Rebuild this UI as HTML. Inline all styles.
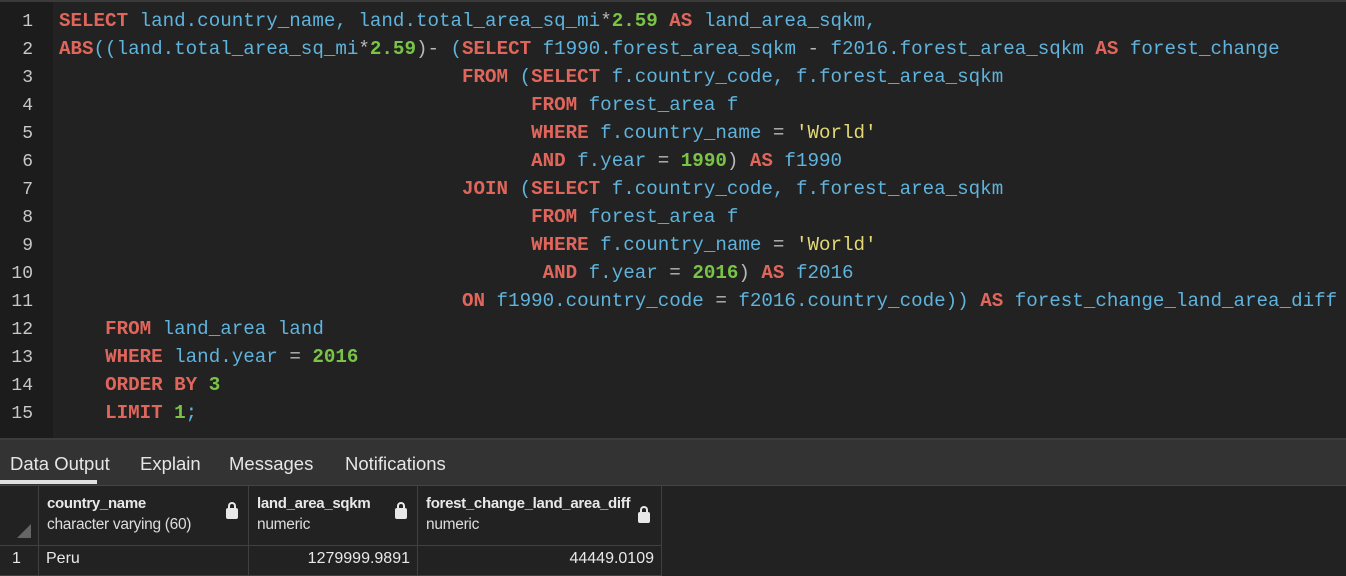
<!DOCTYPE html>
<html><head><style>
body{margin:0;width:1346px;height:575px;background:#222;overflow:hidden;position:relative;font-family:"Liberation Sans",sans-serif}
#top{position:absolute;left:0;top:0;width:1346px;height:2px;background:#3a3a3a}
#gut{position:absolute;left:0;top:2px;width:53px;height:436px;background:#1c1c1c}
#ed{position:absolute;left:0;top:2px;width:1346px;height:436px}
.ln{position:absolute;left:0;width:33px;text-align:right;color:#c8c8c8;font:18px "Liberation Mono",monospace;}
.code{position:absolute;left:59px;white-space:pre;font:19.2px "Liberation Mono",monospace;color:#5fb3dc;}
.k{color:#e0665c;font-weight:bold}
.n{color:#79c447;font-weight:bold}
.s{color:#e3d873}
.p{color:#b8b8b8}
#tabs{position:absolute;left:0;top:438px;width:1346px;height:47px;background:#333;border-top:2px solid #3c3c3c}
.tab{position:absolute;top:13px;color:#e6e6e6;font-size:18.5px}
#ul{position:absolute;left:0;top:40px;width:97px;height:4px;background:#e0e0e0}
#grid{position:absolute;left:0;top:485px;width:1346px;height:90px;background:#222;border-top:1px solid #444}
.c{position:absolute;border-right:1px solid #404040;border-bottom:1px solid #404040;box-sizing:border-box;color:#e8e8e8}
.h1{font-weight:bold;font-size:15px;position:absolute;left:9px;top:9px;letter-spacing:-0.3px}
.h2{font-size:15.5px;position:absolute;left:9px;top:30px;color:#ddd;letter-spacing:-0.3px}
.lock{position:absolute;top:22px;width:12px;height:11px;background:#e8e8e8;border-radius:2px}
.lock:before{content:"";position:absolute;left:2px;top:-6px;width:4px;height:5px;border:2px solid #e8e8e8;border-bottom:none;border-radius:4px 4px 0 0}
</style></head><body>
<div id="top"></div><div id="gut"></div>
<div id="ed">
<div class="ln" style="top:10px">1</div><div class="ln" style="top:38px">2</div><div class="ln" style="top:66px">3</div><div class="ln" style="top:94px">4</div><div class="ln" style="top:122px">5</div><div class="ln" style="top:150px">6</div><div class="ln" style="top:178px">7</div><div class="ln" style="top:206px">8</div><div class="ln" style="top:234px">9</div><div class="ln" style="top:262px">10</div><div class="ln" style="top:290px">11</div><div class="ln" style="top:318px">12</div><div class="ln" style="top:346px">13</div><div class="ln" style="top:374px">14</div><div class="ln" style="top:402px">15</div>
<div class="code" style="top:5px;line-height:28px"><span class="k">SELECT</span> land.country_name, land.total_area_sq_mi<span class="p">*</span><span class="n">2.59</span> <span class="k">AS</span> land_area_sqkm,
<span class="k">ABS</span>((land.total_area_sq_mi<span class="p">*</span><span class="n">2.59</span><span class="p">)-</span> (<span class="k">SELECT</span> f1990.forest_area_sqkm <span class="p">-</span> f2016.forest_area_sqkm <span class="k">AS</span> forest_change
                                   <span class="k">FROM</span> (<span class="k">SELECT</span> f.country_code, f.forest_area_sqkm
                                         <span class="k">FROM</span> forest_area f
                                         <span class="k">WHERE</span> f.country_name <span class="p">=</span> <span class="s">'World'</span>
                                         <span class="k">AND</span> f.year <span class="p">=</span> <span class="n">1990</span><span class="p">)</span> <span class="k">AS</span> f1990
                                   <span class="k">JOIN</span> (<span class="k">SELECT</span> f.country_code, f.forest_area_sqkm
                                         <span class="k">FROM</span> forest_area f
                                         <span class="k">WHERE</span> f.country_name <span class="p">=</span> <span class="s">'World'</span>
                                          <span class="k">AND</span> f.year <span class="p">=</span> <span class="n">2016</span><span class="p">)</span> <span class="k">AS</span> f2016
                                   <span class="k">ON</span> f1990.country_code <span class="p">=</span> f2016.country_code)) <span class="k">AS</span> forest_change_land_area_diff
    <span class="k">FROM</span> land_area land
    <span class="k">WHERE</span> land.year <span class="p">=</span> <span class="n">2016</span>
    <span class="k">ORDER BY</span> <span class="n">3</span>
    <span class="k">LIMIT</span> <span class="n">1</span>;</div>
</div>
<div id="tabs">
<span class="tab" style="left:10px">Data Output</span><span class="tab" style="left:140px">Explain</span><span class="tab" style="left:229px">Messages</span><span class="tab" style="left:345px">Notifications</span>
<div id="ul"></div>
</div>
<div id="grid">
<div class="c" style="left:0;top:0;width:39px;height:60px"><div style="position:absolute;left:17px;top:38px;width:0;height:0;border-left:14px solid transparent;border-bottom:14px solid #666"></div></div>
<div class="c" style="left:38px;top:0;width:211px;height:60px"><span class="h1">country_name</span><span class="h2">character varying (60)</span><div class="lock" style="left:188px"></div></div>
<div class="c" style="left:248px;top:0;width:170px;height:60px"><span class="h1">land_area_sqkm</span><span class="h2">numeric</span><div class="lock" style="left:147px"></div></div>
<div class="c" style="left:417px;top:0;width:245px;height:60px"><span class="h1">forest_change_land_area_diff</span><span class="h2">numeric</span><div class="lock" style="left:221px;top:26px"></div></div>
<div class="c" style="left:0;top:59px;width:39px;height:31px;font-size:16px"><span style="position:absolute;left:12px;top:5px">1</span></div>
<div class="c" style="left:38px;top:59px;width:211px;height:31px;font-size:16px"><span style="position:absolute;left:8px;top:5px">Peru</span></div>
<div class="c" style="left:248px;top:59px;width:170px;height:31px;font-size:16px"><span style="position:absolute;right:7px;top:5px">1279999.9891</span></div>
<div class="c" style="left:417px;top:59px;width:245px;height:31px;font-size:16px"><span style="position:absolute;right:7px;top:5px">44449.0109</span></div>
</div>
</body></html>
